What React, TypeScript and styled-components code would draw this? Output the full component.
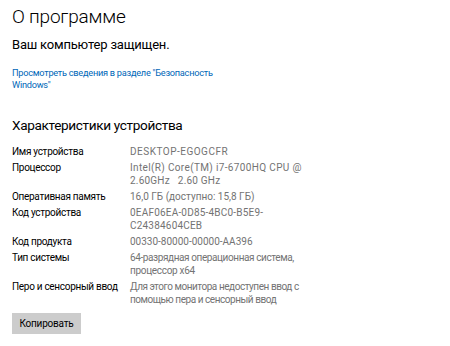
import React from "react";
import styled, { createGlobalStyle } from "styled-components";

const Global = createGlobalStyle`
  html, body { margin: 0; padding: 0; background: #ffffff; }
  body { font-family: Roboto, "Noto Sans", "Liberation Sans", sans-serif; color: #000; }
`;

const Page = styled.div`
  display: flex;
  flex-direction: column;
  align-items: flex-start;
  padding: 4px 12px 0 12px;
  width: 450px;
  height: 346px;
  box-sizing: border-box;
  overflow: hidden;
`;

const Title = styled.h1`
  margin: 0;
  font-size: 19px;
  font-weight: 300;
  line-height: 26px;
  letter-spacing: -0.2px;
  color: #000;
`;

const Status = styled.div`
  margin-top: 5px;
  font-size: 13px;
  line-height: 20px;
  font-weight: 400;
  letter-spacing: -0.2px;
`;

const Link = styled.a`
  margin-top: 12px;
  font-size: 9.2px;
  line-height: 12px;
  letter-spacing: -0.25px;
  color: #0067b8;
  text-decoration: none;
  width: 212px;
`;

const SectionTitle = styled.h2`
  margin: 23px 0 0 0;
  font-size: 13.6px;
  font-weight: 400;
  line-height: 22px;
  letter-spacing: -0.35px;
`;

const Specs = styled.div`
  margin-top: 9px;
  display: grid;
  grid-template-columns: 118px 220px;
  row-gap: 3px;
  font-size: 10px;
  line-height: 13px;
`;

const Label = styled.div`
  color: #000;
  letter-spacing: -0.3px;
`;

const Value = styled.div`
  color: #737373;
  display: flex;
  flex-direction: column;
`;

const Line = styled.span<{ $tracking: number }>`
  white-space: pre;
  letter-spacing: ${(p) => p.$tracking}px;
`;

const CopyButton = styled.button`
  margin-top: 7px;
  width: 69px;
  height: 21px;
  border: none;
  background: #cccccc;
  font-family: inherit;
  font-size: 10px;
  letter-spacing: -0.2px;
  color: #000;
  padding: 0;
`;

type Spec = { label: string; lines: [string, number][] };

const specs: Spec[] = [
  { label: "Имя устройства", lines: [["DESKTOP-EGOGCFR", 0.5]] },
  {
    label: "Процессор",
    lines: [
      ["Intel(R) Core(TM) i7-6700HQ CPU @", 0.35],
      ["2.60GHz   2.60 GHz", 0.2],
    ],
  },
  { label: "Оперативная память", lines: [["16,0 ГБ (доступно: 15,8 ГБ)", 0]] },
  {
    label: "Код устройства",
    lines: [
      ["0EAF06EA-0D85-4BC0-B5E9-", 0.2],
      ["C24384604CEB", 0.2],
    ],
  },
  { label: "Код продукта", lines: [["00330-80000-00000-AA396", 0]] },
  {
    label: "Тип системы",
    lines: [
      ["64-разрядная операционная система,", -0.4],
      ["процессор x64", -0.3],
    ],
  },
  {
    label: "Перо и сенсорный ввод",
    lines: [
      ["Для этого монитора недоступен ввод с", -0.45],
      ["помощью пера и сенсорный ввод", -0.45],
    ],
  },
];

export default function App() {
  return (
    <>
      <Global />
      <Page>
        <Title>О программе</Title>
        <Status>Ваш компьютер защищен.</Status>
        <Link href="#">Просмотреть сведения в разделе "Безопасность Windows"</Link>
        <SectionTitle>Характеристики устройства</SectionTitle>
        <Specs>
          {specs.map(({ label, lines }) => (
            <React.Fragment key={label}>
              <Label>{label}</Label>
              <Value>
                {lines.map(([text, tracking]) => (
                  <Line key={text} $tracking={tracking}>
                    {text}
                  </Line>
                ))}
              </Value>
            </React.Fragment>
          ))}
        </Specs>
        <CopyButton>Копировать</CopyButton>
      </Page>
    </>
  );
}
